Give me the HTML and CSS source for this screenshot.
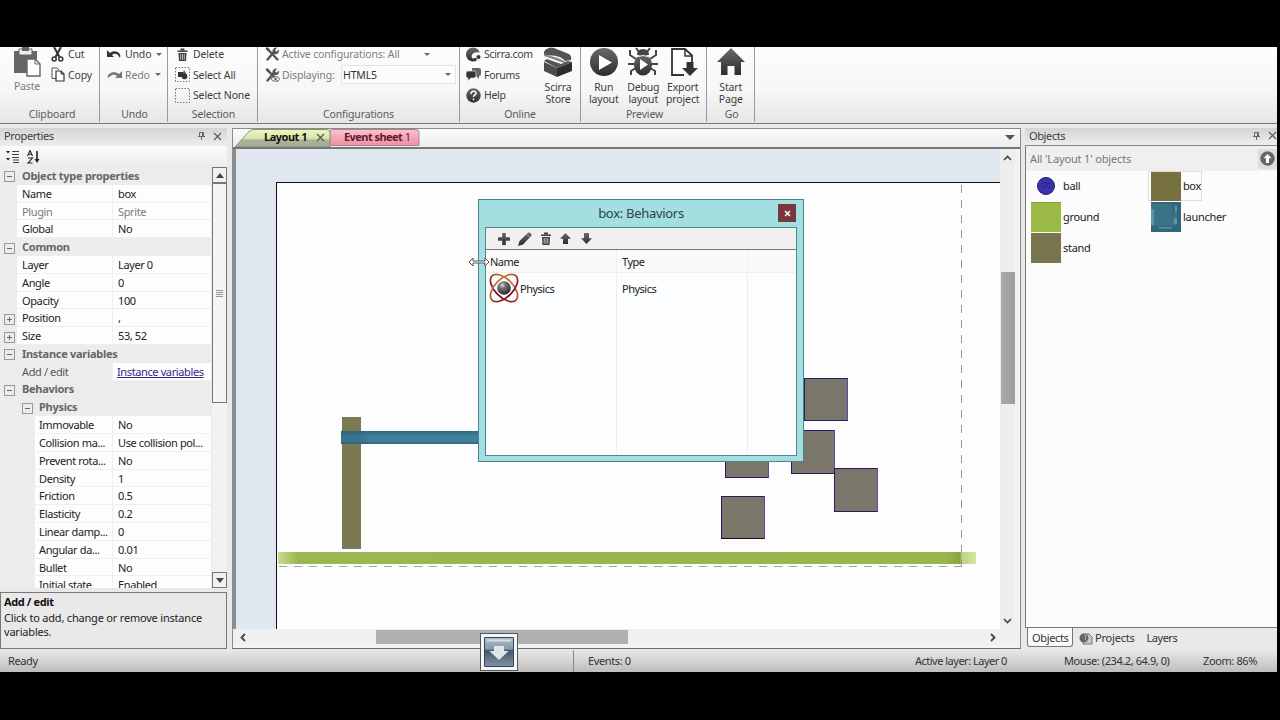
FILE: index.html
```html
<!DOCTYPE html>
<html lang="en">
<head>
<meta charset="utf-8">
<title>Layout 1</title>
<link rel="stylesheet" href="styles.css">
</head>
<body>
<svg class="defs" width="0" height="0">
  <defs>
    <linearGradient id="dark" x1="0" y1="0" x2="0" y2="1"><stop offset="0" stop-color="#6a6a6a"/><stop offset="1" stop-color="#2c2c2c"/></linearGradient>
    <linearGradient id="atom" x1="0" y1="0" x2="0" y2="1"><stop offset="0" stop-color="#c8783c"/><stop offset="1" stop-color="#7c1226"/></linearGradient>
    <radialGradient id="ball" cx=".38" cy=".3" r=".75"><stop offset="0" stop-color="#ddd"/><stop offset=".3" stop-color="#777"/><stop offset="1" stop-color="#222"/></radialGradient>
    <g id="trash"><path d="M1 2.5h10v1.6H1zM4 .6h4v1.6H4zM2 5h8l-.5 8h-7z" fill="#3c3c3c"/><path d="M4.2 6v5.8M6 6v5.8M7.8 6v5.8" stroke="#ddd" stroke-width=".8"/></g>
    <g id="tools"><path d="M2.500 2 12.500 12.500M9 5 2.500 12.500" stroke="#555" stroke-width="2.400" stroke-linecap="round" fill="none"/><path d="M14 2.600 11.500 4.800 10 3.300 12 .7A3.800 3.800 0 0 0 7.600 5.500L9.500 7.200a3.800 3.800 0 0 0 4.500-4.600z" fill="#555"/><path d="M.5 1.500 2 0l3 2.500-2 2z" fill="#555"/></g>
    <g id="pin"><path d="M2.500 1.500v4h4v-4zM5.500 1.500v4M1 5.500h7M4.500 6v3" fill="none" stroke="#666" stroke-width="1"/></g>
  </defs>
</svg>
<div class="app">
  <header class="ribbon">
    <section class="group g-clip">
      <div class="group-body">
        <div class="big paste">
          <svg width="28" height="32" viewBox="0 0 28 32"><path d="M1 4h23v22H1z" fill="#666"/><path d="M6 2h13v6H6z" fill="#eee" stroke="#666"/><path d="M9 0h7v4H9z" fill="#666"/><path d="M14 12h8l5 5v12H14z" fill="#fff" stroke="#666" stroke-width="1.400"/><path d="M22 12v5h5" fill="none" stroke="#666"/></svg>
          <span class="dim">Paste</span>
        </div>
        <div class="rows">
          <div class="row"><svg width="14" height="15" viewBox="0 0 14 15"><path d="M3 0l5.500 10M10 0 4.500 10" stroke="#333" stroke-width="2"/><circle cx="3.200" cy="12" r="2" fill="none" stroke="#333" stroke-width="1.500"/><circle cx="9.800" cy="12" r="2" fill="none" stroke="#333" stroke-width="1.500"/></svg><span>Cut</span></div>
          <div class="row"><svg width="14" height="15" viewBox="0 0 14 15"><path d="M5 11.500H1V1h5l2 2" fill="#fff" stroke="#555"/><path d="M5 4h5l3 3v7H5z" fill="#fff" stroke="#333" stroke-width="1.200"/><path d="M10 4v3h3" fill="none" stroke="#333"/></svg><span>Copy</span></div>
        </div>
      </div>
      <div class="group-label">Clipboard</div>
    </section>
    <section class="group g-undo">
      <div class="group-body">
        <div class="rows">
          <div class="row"><svg width="15" height="10" viewBox="0 0 15 10"><path d="M0 1v7h7L5 6c3-2.500 6-1 8 3 2-5-5-9-10-5z" fill="#333"/></svg><span>Undo</span><i class="caret"></i></div>
          <div class="row dim"><svg width="15" height="10" viewBox="0 0 15 10"><path d="M15 1v7H8l2-2C7 3.500 4 5 1 8-1 4 7 0 12 4z" fill="#777"/></svg><span>Redo</span><i class="caret"></i></div>
        </div>
      </div>
      <div class="group-label">Undo</div>
    </section>
    <section class="group g-sel">
      <div class="group-body">
        <div class="rows">
          <div class="row"><svg width="15" height="15" viewBox="-1.500 -1 15 15"><use href="#trash"/></svg><span>Delete</span></div>
          <div class="row"><svg width="15" height="15" viewBox="0 0 15 15"><path d="M.5.5h14v14H.5z" fill="none" stroke="#777" stroke-dasharray="1.500 1.500"/><path d="M3 5h5v5H3z" fill="#333"/><path d="M9 3l3 5H7z" fill="#555"/><circle cx="9.500" cy="9.500" r="2.800" fill="#333"/></svg><span>Select All</span></div>
          <div class="row"><svg width="15" height="15" viewBox="0 0 15 15"><path d="M.5.5h14v14H.5z" fill="none" stroke="#777" stroke-dasharray="1.500 1.500"/></svg><span>Select None</span></div>
        </div>
      </div>
      <div class="group-label">Selection</div>
    </section>
    <section class="group g-conf">
      <div class="group-body">
        <div class="rows">
          <div class="row dim"><svg width="15" height="14" viewBox="0 0 15 14"><use href="#tools"/></svg><span class="wide">Active configurations: All</span><i class="caret"></i></div>
          <div class="row dim"><svg width="15" height="14" viewBox="0 0 15 14"><use href="#tools"/><ellipse cx="10.500" cy="11" rx="4" ry="2.200" fill="#fff" stroke="#666"/><circle cx="10.500" cy="11" r="1.200" fill="#555"/></svg><span class="disp">Displaying:</span><div class="combo"><span>HTML5</span><i class="caret"></i></div></div>
        </div>
      </div>
      <div class="group-label">Configurations</div>
    </section>
    <section class="group g-online">
      <div class="group-body">
        <div class="rows">
          <div class="row"><svg width="15" height="15" viewBox="0 0 15 15"><circle cx="7" cy="7.500" r="7" fill="url(#dark)"/><path d="M5.500 10c0-4 3-5.500 9-4.500l.5 10-5 0z" fill="#f5f5f5"/><circle cx="12.500" cy="10" r="2" fill="#333"/><circle cx="9" cy="12.500" r="1.800" fill="#333"/></svg><span>Scirra.com</span></div>
          <div class="row"><svg width="15" height="15" viewBox="0 0 15 15"><path d="M6 1h7q2 0 2 2v4q0 2-2 2v3L10 9H6z" fill="#666"/><path d="M2 4h6q2 0 2 2v3q0 2-2 2H5l-3.500 3L2 11Q0 11 0 9V6q0-2 2-2z" fill="#333" stroke="#fff" stroke-width=".6"/></svg><span>Forums</span></div>
          <div class="row"><svg width="15" height="15" viewBox="0 0 15 15"><circle cx="7.500" cy="7.500" r="7.200" fill="url(#dark)"/><path d="M5 6c0-4 5.500-3.500 5-.5-.3 1.500-2.500 1.500-2.500 3.500M7.500 10.500v1.800" fill="none" stroke="#fff" stroke-width="1.500"/></svg><span>Help</span></div>
        </div>
        <div class="big store"><svg width="30" height="30" viewBox="0 0 30 30"><path d="M1 5Q2 2 6 1q3-1 5 0l15 6q3 2 2 6l-6 1Q18 8 1 8z" fill="#555"/><path d="M1 7l14 4 8 4-2 1L1 9z" fill="#888"/><path d="M1 15l13 6v9L1 24z" fill="#4c4c4c"/><path d="M14 21l15-6v9l-15 6z" fill="#2c2c2c"/><path d="M1 14l3-2 14 5 7-3 4 1-15 6z" fill="#555"/></svg><span>Scirra<br>Store</span></div>
      </div>
      <div class="group-label">Online</div>
    </section>
    <section class="group g-prev">
      <div class="group-body">
        <div class="big"><svg width="30" height="30" viewBox="0 0 30 30"><circle cx="15" cy="15" r="14" fill="url(#dark)"/><path d="M10 8l13 7.500L10 23z" fill="#fff"/></svg><span>Run<br>layout</span></div>
        <div class="big"><svg width="30" height="30" viewBox="0 0 30 30"><path d="M8 12 2 8V3M22 12l6-4V3M7 17H0M23 17h7M8 21l-5 3v4M22 21l5 3v4M11 5 8 1M19 5l3-4" fill="none" stroke="#444" stroke-width="2"/><path d="M9 8q0-6 6-6t6 6z" fill="#444"/><ellipse cx="15" cy="18" rx="9" ry="10.500" fill="url(#dark)"/><path d="M8 10q7-3 14 0" stroke="#eee" fill="none"/><path d="M12 12l8 5.500-8 5.500z" fill="#fff"/></svg><span>Debug<br>layout</span></div>
        <div class="big"><svg width="30" height="30" viewBox="0 0 30 30"><path d="M16 28H4V2h13l7 6.500V16" fill="#fff" stroke="#333" stroke-width="1.800"/><path d="M17 2v7h7" fill="none" stroke="#333" stroke-width="1.500"/><path d="M18.500 15h7v6H30l-8 8-8-8h4.500z" fill="#333"/></svg><span>Export<br>project</span></div>
      </div>
      <div class="group-label">Preview</div>
    </section>
    <section class="group g-go">
      <div class="group-body">
        <div class="big"><svg width="30" height="30" viewBox="0 0 30 30"><path d="M15 1l14 14h-4v13h-6.500v-9h-7v9H5V15H1z" fill="url(#dark)"/></svg><span>Start<br>Page</span></div>
      </div>
      <div class="group-label">Go</div>
    </section>
  </header>

  <main class="work">
    <aside class="props">
      <div class="panel-head"><span>Properties</span><svg width="9" height="10" viewBox="0 0 9 10"><use href="#pin"/></svg><svg width="9" height="9" viewBox="0 0 9 9"><path d="M1 1l7 7M8 1 1 8" stroke="#555" stroke-width="1.100"/></svg></div>
      <div class="props-tools">
        <svg width="13" height="13" viewBox="0 0 13 13"><path d="M0 1h4L2 3.500zM0 8h4l-2 2.500z" fill="#222"/><path d="M6 1.500h7M6 4.500h7M6 7.500h7M7 10h6M7 12.500h6" stroke="#444"/></svg>
        <svg width="13" height="14" viewBox="0 0 13 14"><path d="M.5 6 3 .5 5.500 6M1.500 4.300h3M1 8h4.500L1 13h4.500" fill="none" stroke="#222" stroke-width="1.100"/><path d="M10 1v10" stroke="#222" stroke-width="1.600"/><path d="M7.500 9h5L10 13z" fill="#222"/></svg>
      </div>
      <div class="props-body">
        <div class="grid">
          <div class="cat"><i class="tog"></i><b>Object type properties</b></div>
          <div class="pr"><i></i><span>Name</span><span>box</span></div>
          <div class="pr ro"><i></i><span>Plugin</span><span>Sprite</span></div>
          <div class="pr"><i></i><span>Global</span><span>No</span></div>
          <div class="cat"><i class="tog"></i><b>Common</b></div>
          <div class="pr"><i></i><span>Layer</span><span>Layer 0</span></div>
          <div class="pr"><i></i><span>Angle</span><span>0</span></div>
          <div class="pr"><i></i><span>Opacity</span><span>100</span></div>
          <div class="pr"><i class="tog plus"></i><span>Position</span><span>,</span></div>
          <div class="pr"><i class="tog plus"></i><span>Size</span><span>53, 52</span></div>
          <div class="cat"><i class="tog"></i><b>Instance variables</b></div>
          <div class="pr sel"><i></i><span>Add / edit</span><span><u>Instance variables</u></span></div>
          <div class="cat"><i class="tog"></i><b>Behaviors</b></div>
          <div class="cat sub"><i class="tog"></i><b>Physics</b></div>
          <div class="pr in"><i></i><span>Immovable</span><span>No</span></div>
          <div class="pr in"><i></i><span>Collision ma...</span><span>Use collision pol...</span></div>
          <div class="pr in"><i></i><span>Prevent rota...</span><span>No</span></div>
          <div class="pr in"><i></i><span>Density</span><span>1</span></div>
          <div class="pr in"><i></i><span>Friction</span><span>0.5</span></div>
          <div class="pr in"><i></i><span>Elasticity</span><span>0.2</span></div>
          <div class="pr in"><i></i><span>Linear damp...</span><span>0</span></div>
          <div class="pr in"><i></i><span>Angular da...</span><span>0.01</span></div>
          <div class="pr in"><i></i><span>Bullet</span><span>No</span></div>
          <div class="pr in"><i></i><span>Initial state</span><span>Enabled</span></div>
        </div>
        <div class="sb">
          <div class="sb-btn"><svg width="8" height="5" viewBox="0 0 8 5"><path d="M0 5 4 0l4 5z" fill="#444"/></svg></div>
          <div class="sb-thumb"><svg width="7" height="7" viewBox="0 0 7 7"><path d="M0 .5h7M0 2.500h7M0 4.500h7M0 6.500h7" stroke="#999"/></svg></div>
          <div class="sb-btn"><svg width="8" height="5" viewBox="0 0 8 5"><path d="M0 0 4 5l4-5z" fill="#444"/></svg></div>
        </div>
      </div>
      <div class="desc"><b>Add / edit</b><p>Click to add, change or remove instance<br>variables.</p></div>
    </aside>

    <section class="editor">
      <div class="tabs">
        <svg class="tabshape" width="190" height="18" viewBox="0 0 190 18">
          <defs><linearGradient id="gt" x1="0" y1="0" x2="0" y2="1"><stop offset="0" stop-color="#eef9b8"/><stop offset=".5" stop-color="#d8e4ae"/><stop offset=".62" stop-color="#a9b397"/><stop offset="1" stop-color="#a3ab98"/></linearGradient><linearGradient id="pt" x1="0" y1="0" x2="0" y2="1"><stop offset="0" stop-color="#fbc3cf"/><stop offset=".45" stop-color="#f8a9bb"/><stop offset="1" stop-color="#ef8ea5"/></linearGradient></defs>
          <path d="M96 16.500V3q0-2.500 2.500-2.500H182q3 0 3 3v13z" fill="url(#pt)" stroke="#a9878e"/>
          <path d="M1 18 14 3.500Q16.500.5 20 .5H93q3 0 3 3V18z" fill="url(#gt)" stroke="#8b9080"/>
        </svg>
        <b class="t1">Layout 1</b>
        <svg width="9" height="9" viewBox="0 0 9 9"><path d="M1 1l7 7M8 1 1 8" stroke="#54594a" stroke-width="1.200"/></svg>
        <b class="t2">Event sheet <span>1</span></b>
        <i class="drop"></i>
      </div>
      <div class="view">
        <div class="canvas">
          <div class="sheet"></div>
          <div class="obj stand"></div>
          <div class="obj launcher"></div>
          <div class="obj ground"></div>
          <svg class="bounds" width="688" height="385" viewBox="0 0 688 385"><path d="M1 383.500H684" stroke="#a4a4a4" stroke-dasharray="8 7"/><path d="M683.500 2V384" stroke="#999" stroke-dasharray="8 7"/></svg>
          <div class="obj crate c1"></div>
          <div class="obj crate c2"></div>
          <div class="obj crate c3"></div>
          <div class="obj crate c4"></div>
          <div class="obj crate c5"></div>
        </div>
        <div class="vbar">
          <svg width="9" height="6" viewBox="0 0 9 6"><path d="M1 5l3.500-3.500L8 5" fill="none" stroke="#444" stroke-width="1.600"/></svg>
          <i></i>
          <svg width="9" height="6" viewBox="0 0 9 6"><path d="M1 1l3.500 3.500L8 1" fill="none" stroke="#444" stroke-width="1.600"/></svg>
        </div>
      </div>
      <div class="hbar">
        <svg width="6" height="9" viewBox="0 0 6 9"><path d="M5 1 1.500 4.500 5 8" fill="none" stroke="#444" stroke-width="1.800"/></svg>
        <i></i>
        <svg width="6" height="9" viewBox="0 0 6 9"><path d="M1 1l3.500 3.500L1 8" fill="none" stroke="#444" stroke-width="1.800"/></svg>
      </div>
    </section>

    <aside class="objects">
      <div class="panel-head"><span>Objects</span><svg width="9" height="10" viewBox="0 0 9 10"><use href="#pin"/></svg><svg width="9" height="9" viewBox="0 0 9 9"><path d="M1 1l7 7M8 1 1 8" stroke="#555" stroke-width="1.100"/></svg></div>
      <div class="filter"><span>All 'Layout 1' objects</span><div class="up"><svg width="15" height="15" viewBox="0 0 15 15"><circle cx="7.500" cy="7.500" r="7.200" fill="#666"/><path d="M7.500 3l4 4.200H9V12H6V7.200H3.500z" fill="#fff"/></svg></div></div>
      <div class="list">
        <div class="item"><svg width="30" height="30" viewBox="0 0 30 30"><circle cx="15" cy="15" r="8.500" fill="#3a32a8" stroke="#23206c"/><path d="M10 13l3-2 3 2 4-1M11 17l4-2 5 2" stroke="#292480" fill="none"/></svg><span>ball</span></div>
        <div class="item hot"><i class="sw box"></i><span>box</span></div>
        <div class="item"><i class="sw green"></i><span>ground</span></div>
        <div class="item"><svg width="30" height="30" viewBox="0 0 30 30"><path d="M0 0h30v30H0z" fill="#3c7286"/><path d="M0 0h30v2H0zM0 24h30v6H0zM21 2h2v12h-2zM26 2h4v22h-4z" fill="#32677b"/><path d="M0 7h3v16H0zM24 4h2v6h-2zM8 25h13v1.500H8zM23 16h3v6h-3z" fill="#5c93a5"/></svg><span>launcher</span></div>
        <div class="item"><i class="sw olive"></i><span>stand</span></div>
      </div>
      <div class="btabs">
        <span class="on">Objects</span>
        <span class="bt"><svg width="14" height="14" viewBox="0 0 14 14"><path d="M4 3h6l3 3v7H4z" fill="#ccc" stroke="#777"/><circle cx="5" cy="7" r="4.500" fill="#666"/><path d="M5 3l2 2-1 3 2 2" stroke="#bbb" fill="none"/></svg>Projects</span>
        <span class="bt">Layers</span>
      </div>
    </aside>
  </main>

  <footer class="status">
    <span class="s1">Ready</span><span class="s2">Events: 0</span><span class="s3">Active layer: Layer 0</span><span class="s4">Mouse: (234.2, 64.9, 0)</span><span class="s5">Zoom: 86%</span>
  </footer>

  <div class="dialog">
    <div class="dlg-title"><span>box: Behaviors</span><div class="x"><svg width="7" height="7" viewBox="0 0 7 7"><path d="M1 1l5 5M6 1 1 6" stroke="#fff" stroke-width="1.500"/></svg></div></div>
    <div class="dlg-body">
      <div class="dlg-tools">
        <svg width="12" height="12" viewBox="0 0 12 12"><path d="M4.200 0h3.600v4.200H12v3.600H7.800V12H4.200V7.800H0V4.200h4.200z" fill="url(#dark)"/></svg>
        <svg width="14" height="14" viewBox="0 0 14 14"><path d="M0 14l1.500-5L10 .8q1-.8 2 0l1.200 1.200q.8 1 0 2L5 12.500z" fill="url(#dark)"/><path d="M9 2.500 11.500 5" stroke="#ccc" stroke-width=".7"/></svg>
        <svg width="12" height="14" viewBox="0 0 12 14"><use href="#trash"/></svg>
        <svg width="11" height="11" viewBox="0 0 11 11"><path d="M5.500 0 11 5.800H8V11H3V5.800H0z" fill="url(#dark)"/></svg>
        <svg width="11" height="11" viewBox="0 0 11 11"><path d="M5.500 11 11 5.200H8V0H3v5.200H0z" fill="url(#dark)"/></svg>
      </div>
      <div class="cols head"><span>Name</span><span>Type</span><span></span></div>
      <div class="cols data"><span><svg width="30" height="30" viewBox="0 0 30 30"><g fill="none" stroke="url(#atom)" stroke-width="1.800"><ellipse cx="15" cy="15" rx="17" ry="9" transform="rotate(45 15 15)"/><ellipse cx="15" cy="15" rx="17" ry="9" transform="rotate(-45 15 15)"/></g><circle cx="15" cy="15" r="6.800" fill="url(#ball)"/></svg>Physics</span><span>Physics</span><span></span></div>
    </div>
  </div>
  <svg class="cursor" width="22" height="10" viewBox="0 0 22 10"><path d="M1 5l4-4v3h12V1l4 4-4 4V6H5v3z" fill="#fff" stroke="#444" stroke-width=".9"/></svg>
  <div class="badge"><svg width="30" height="30" viewBox="0 0 30 30"><defs><linearGradient id="bd" x1="0" y1="0" x2="0" y2="1"><stop offset="0" stop-color="#b4bec8"/><stop offset=".4" stop-color="#8798a8"/><stop offset=".45" stop-color="#43566a"/><stop offset="1" stop-color="#7f92a6"/></linearGradient></defs><path d="M.5.5h29v29H.5z" fill="url(#bd)" stroke="#34475a"/><path d="M3 3.500h24" stroke="#d5dce2" stroke-width="2"/><path d="M10 9h10v5h4.500L15 23l-9.500-9H10z" fill="#dfe5eb"/></svg></div>
</div>
</body>
</html>
```
FILE: styles.css
```css
* { box-sizing: border-box; }
body { margin: 0; padding: 47px 0 0; width: 1280px; height: 720px; overflow: hidden; background: #000; color: #222; font: 11px/16px "Noto Sans", "Open Sans", sans-serif; letter-spacing: -0.38px; }
svg { display: block; flex: none; }
.defs { position: absolute; }
span, b { white-space: nowrap; }
.app { width: 1277px; height: 625px; display: flex; flex-direction: column; background: #e9e9e9; overflow: hidden; }

.ribbon { height: 77px; flex: none; display: flex; background: linear-gradient(#fdfdfd, #f7f7f7 55%, #e6e6e6); border-bottom: 1px solid #777; overflow: hidden; color: #3c3c3c; letter-spacing: -0.15px; font-size: 10.5px; }
.group { border-right: 1px solid #9a9a9a; display: flex; flex-direction: column; margin-bottom: 2px; height: 75px; }
.group-body { height: 60px; flex: none; display: flex; }
.group-label { text-align: center; line-height: 15px; color: #5a5a5a; }
.g-clip { width: 100px; padding-left: 12px; }
.g-clip .group-label { margin-left: -7px; }
.g-undo { width: 68px; padding-left: 7px; }
.g-undo .group-label { margin-left: -5px; }
.g-sel { width: 90px; padding-left: 7px; }
.g-sel .group-label { margin-left: -5px; }
.g-conf { width: 202px; padding-left: 7px; }
.g-conf .group-label { margin-left: -7px; }
.g-online { width: 121px; padding-left: 6px; }
.g-online .group-label { margin-left: -6px; }
.g-prev { width: 126px; padding-left: 3px; }
.g-prev .group-label { margin-left: -1px; }
.g-go { width: 48px; padding-left: 4px; }
.g-go .group-label { margin-left: -2px; }
.rows { margin-top: -3px; }
.row { height: 20.6px; display: flex; align-items: center; gap: 3px; }
.g-clip .rows { margin-left: 9px; }
.dim { color: #7c7c7c; }
.caret { border: 3px solid transparent; border-top-color: #666; border-bottom: 0; margin-left: 2px; }
.wide { width: 138px; }
.g-conf .row { gap: 2px; }
.combo { width: 115px; height: 19px; border: 1px solid #e4e4e4; background: #fcfcfc; display: flex; align-items: center; justify-content: space-between; padding: 0 4px 0 1px; color: #333; }
.disp { width: 57px; }
.g-online .rows { width: 70px; letter-spacing: -0.3px; }
.big { display: flex; flex-direction: column; align-items: center; text-align: center; line-height: 12px; width: 39.5px; }
.big span { margin-top: 4px; }
.paste { width: 30px; }
.paste span { margin-top: 1px; }
.store { margin: 0 0 0 6px; width: 32px; }

.work { height: 522px; flex: none; display: flex; margin-top: 3px; padding-top: 1px; }
.panel-head { height: 18px; display: flex; align-items: center; padding: 0 5px 2px 4px; gap: 7px; background: linear-gradient(#d4d4d4, #ededed); color: #3c3c3c; }
.panel-head span { flex: 1; }
.props { width: 227px; display: flex; flex-direction: column; }
.props-tools { height: 21px; display: flex; align-items: center; gap: 8px; padding-left: 6px; background: linear-gradient(#fbfbfb, #ececf0); }
.props-body { height: 421px; display: flex; }
.grid { width: 211px; overflow: hidden; background: #ececec; }
.cat, .pr { height: 17.8px; display: flex; align-items: center; }
.cat b { color: #666; padding-left: 5px; letter-spacing: -0.28px; }
.grid i { width: 17px; flex: none; }
.tog { position: relative; height: 17px; }
.tog::before { content: ""; position: absolute; left: 4px; top: 4px; width: 9px; height: 9px; border: 1px solid #999; background: linear-gradient(#666, #666) center / 5px 1px no-repeat; }
.plus::before { background: linear-gradient(#666, #666) center / 5px 1px no-repeat, linear-gradient(#666, #666) center / 1px 5px no-repeat; }
.sub { padding-left: 18px; }
.sub b { padding-left: 4px; }
.pr span { height: 17.8px; line-height: 18px; background: #fdfdfd; border-bottom: 1px solid #efefef; padding-left: 5px; width: 96px; border-right: 1px solid #efefef; }
.pr span + span { width: 98px; border-right: 0; }
.pr.in i { width: 35px; }
.pr.in span { width: 78px; padding-left: 4px; }
.pr.in span + span { width: 98px; padding-left: 5px; }
.ro { color: #7a7a7a; }
.sel span:first-of-type { background: #ececec; color: #555; }
.sel span + span { padding-left: 4px; }
.sel u { color: #35258a; }
.sb { width: 15px; margin-left: 1px; display: flex; flex-direction: column; background: #f2f2f2; }
.sb-btn { height: 16px; border: 1px solid #777; display: grid; place-items: center; background: #f1f1f1; }
.sb-thumb { height: 220px; border: 1px solid #777; display: grid; place-items: center; margin-bottom: auto; background: #f4f4f4; }
.desc { margin-top: 4px; height: 57px; border: 1px solid #777; padding: 1px 3px; line-height: 15px; }
.desc b { color: #111; }
.desc p { margin: 2px 0 0; line-height: 14px; letter-spacing: -0.2px; }

.editor { width: 789px; margin-left: 5px; display: flex; flex-direction: column; border: 1px solid #8a8a8a; border-bottom-color: #6c6f5c; background: #f3f3f3; }
.tabs { height: 20px; flex: none; position: relative; display: flex; align-items: center; border-bottom: 2px solid #777; padding-bottom: 2px; background: linear-gradient(#fafafa, #ededed); }
.tabs > b, .tabs > svg:not(.tabshape) { position: relative; color: #14140c; }
.tabshape { position: absolute; left: 1px; top: 0; }
.t1 { margin-left: 31px; width: 52px; letter-spacing: -0.5px; }
.tabs .t2 { margin-left: 19px; color: #5c1c2c; letter-spacing: -0.55px; }
.t2 span { font-weight: 400; }
.drop { margin: 0 5px 0 auto; border: 5px solid transparent; border-top-color: #555; border-bottom: 0; }
.view { height: 480px; display: flex; }
.canvas { position: relative; width: 767px; overflow: hidden; background: #e1e7ee; border-left: 3px solid #8a8c90; }
.sheet { position: absolute; left: 40px; top: 33px; right: 0; bottom: 0; border: solid #111; border-width: 1px 0 0 1px; background: #fdfdfe; }
.bounds { position: absolute; left: 42px; top: 34px; }
.obj { position: absolute; }
.stand { left: 106px; top: 268px; width: 19px; height: 132px; background: #7a7952; border-bottom: 2px solid #77757c; }
.launcher { left: 105px; top: 282px; width: 140px; height: 13px; background: linear-gradient(90deg, #2e607866 19px, transparent 30px), linear-gradient(#33677f, #40809b 40%, #3f7f9a 80%, #2e6078); }
.ground { left: 42px; top: 403px; width: 698px; height: 12px; background: linear-gradient(90deg, #c8dc96, #9cb650 20px, #9bb54d 668px, #8aa142 682px, #bcd47a 684px, #d4e6a0); }
.crate { width: 44px; height: 44px; background: #7a766a; border: 1px solid #241c66; border-right-color: #5a48b8; }
.c1 { left: 568px; top: 229px; height: 43px; }
.c2 { left: 555px; top: 281px; }
.c3 { left: 598px; top: 319px; }
.c4 { left: 489px; top: 285px; }
.c5 { left: 485px; top: 347px; height: 43px; border-bottom-color: #111; }
.vbar { width: 15px; display: flex; flex-direction: column; align-items: center; justify-content: space-between; padding: 6px 0 5px; background: #eee; }
.vbar i { width: 14px; height: 132px; background: linear-gradient(90deg, #aaa, #9c9c9c); margin-bottom: 104px; }
.hbar { height: 16px; display: flex; align-items: center; background: #f0f0f0; padding: 0 24px 0 7px; }
.hbar i { width: 252px; height: 14px; background: #b0b0b0; margin: 0 auto 0 130px; }

.objects { width: 252px; margin-left: 4px; display: flex; flex-direction: column; }
.objects .panel-head { padding-right: 0; border-bottom: 1px solid #888; }
.filter { height: 25px; display: flex; align-items: center; justify-content: space-between; padding-left: 4px; background: #efefef; color: #777; border-left: 1px solid #777; letter-spacing: -0.15px; }
.up { width: 19px; height: 20px; background: #ddd; display: grid; place-items: center; }
.list { height: 457px; border: solid #777; border-width: 0 0 1px 1px; background: #fcfcfc; display: grid; grid-template-columns: 120px 120px; grid-auto-rows: 31px; align-content: start; padding: 0 0 0 5px; }
.item { display: flex; align-items: center; gap: 2px; height: 30px; letter-spacing: -0.3px; }
.sw { width: 30px; height: 30px; }
.hot { width: 54px; height: 30px; margin-left: -3px; border: 1px solid #ddd; padding-left: 2px; }
.hot i { height: 29px; }
.box { background: #77713f; }
.green { background: #9bb945; border-top: 1px solid #869f3c; }
.olive { background: #77764f; }
.btabs { height: 21px; display: flex; padding-left: 2px; color: #333; letter-spacing: -0.2px; }
.on { height: 19px; width: 46px; padding: 2px 4px; background: #fafafa; border: 1px solid #777; border-top: 0; border-radius: 0 0 3px 3px; letter-spacing: -0.35px; }
.bt { display: flex; gap: 2px; padding: 2px 0 3px; align-items: center; margin-left: 6px; }
.bt + .bt { margin-left: 12px; letter-spacing: -0.5px; }

.status { height: 23px; display: flex; align-items: center; background: linear-gradient(#e9e9e9, #cfcfcf 60%, #bdbdbd); color: #333; }
.status span { line-height: 22px; }
.s1 { width: 573px; padding-left: 8px; }
.s2 { width: 342px; padding-left: 14px; border-left: 1px solid #888; }
.s3 { width: 149px; letter-spacing: -0.5px; }
.s4 { width: 139px; letter-spacing: -0.42px; }

.dialog { position: absolute; left: 478px; top: 199px; width: 326px; height: 263px; background: #a3dee1; border: 1px solid #4f8288; padding: 0 6px 6px; }
.dlg-title { height: 27px; padding-bottom: 1px; display: grid; grid-template-columns: 24px 1fr 24px; align-items: center; }
.dlg-title span { grid-column: 2; text-align: center; font-size: 13px; letter-spacing: -0.3px; color: #2d4549; }
.x { width: 18px; height: 18px; background: #78363f; display: grid; place-items: center; margin-left: 5px; }
.dlg-body { height: 229px; border: 1px solid #53868c; background: #fcfdfe; display: flex; flex-direction: column; }
.dlg-tools { height: 22px; flex: none; display: flex; align-items: center; gap: 8px; padding-left: 12px; background: #f0f0f0; border-bottom: 1px solid #777; }
.dlg-tools svg:nth-child(n+4) { margin-right: 2px; }
.cols { display: grid; grid-template-columns: 131px 131px 1fr; }
.cols span { border-right: 1px solid #efefef; padding-left: 4px; display: flex; align-items: flex-start; letter-spacing: -0.5px; }
.cols span + span { padding-left: 5px; }
.cols span:last-child { border: 0; }
.head { height: 23px; line-height: 23px; border-bottom: 1px solid #f0f0f0; background: #fafafa; }
.data { flex: 1; line-height: 31px; }
.data svg { margin: 0 1px 0 -1px; }
.cursor { position: absolute; left: 468px; top: 257px; }
.badge { position: absolute; left: 480px; top: 633px; width: 38px; height: 38px; border: 1px solid #555; background: #f4f6f8; display: grid; place-items: center; }
```
